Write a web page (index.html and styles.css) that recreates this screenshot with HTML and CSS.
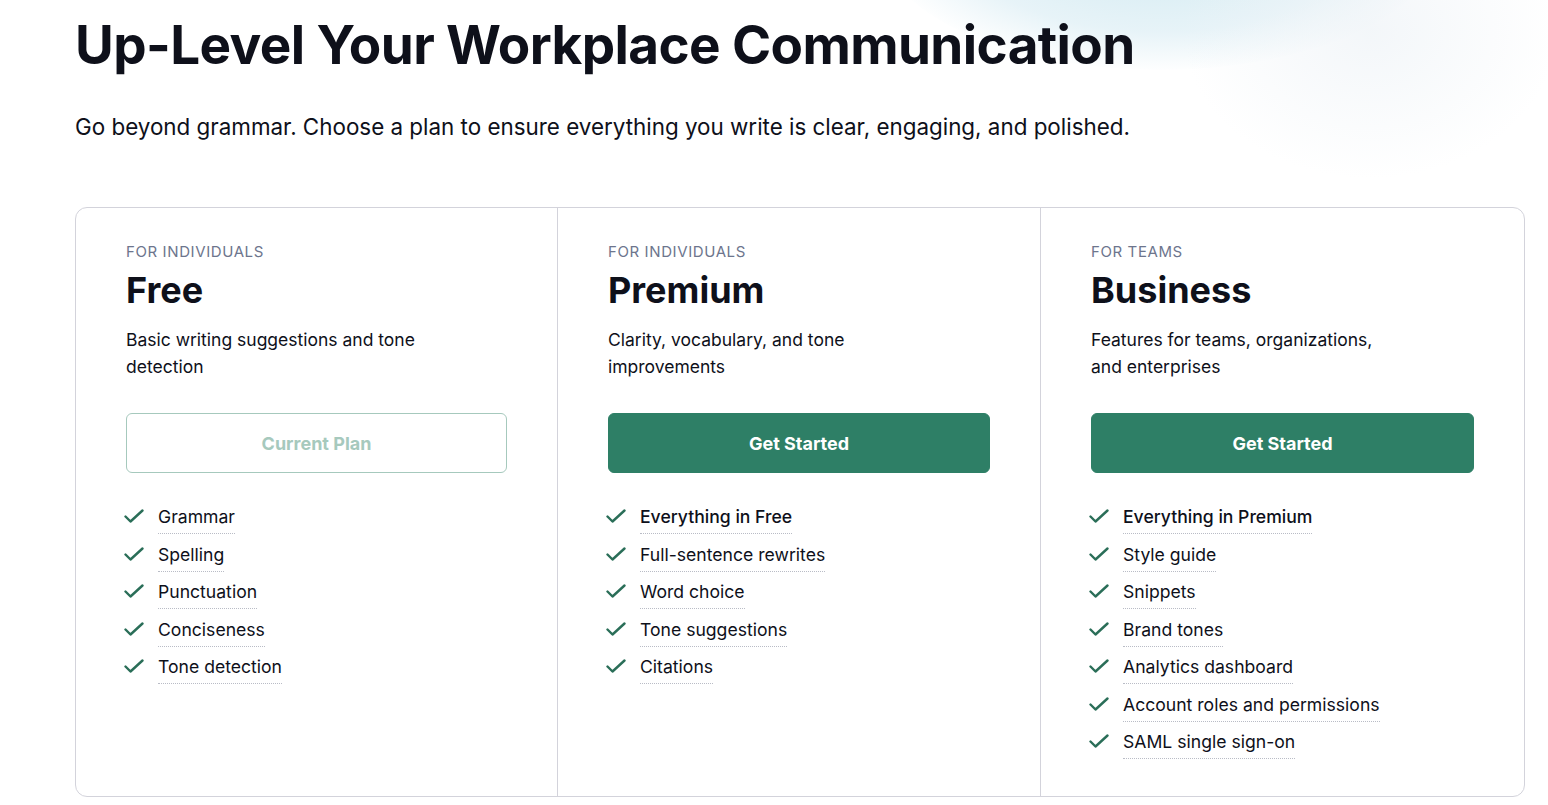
FILE: index.html
```html
<!DOCTYPE html>
<html lang="en">
<head>
<meta charset="utf-8">
<title>Plans</title>
<link rel="stylesheet" href="styles.css">
</head>
<body>
<div class="glow"></div>
<div class="glow2"></div>
<main class="page">
  <h1 class="title">Up-Level Your Workplace Communication</h1>
  <p class="subtitle">Go beyond grammar. Choose a plan to ensure everything you write is clear, engaging, and polished.</p>

  <section class="plans">
    <div class="plan">
      <div class="kicker">FOR INDIVIDUALS</div>
      <h2 class="name">Free</h2>
      <p class="desc">Basic writing suggestions and tone detection</p>
      <button class="btn btn-current">Current Plan</button>
      <ul class="features">
        <li><svg class="check" viewBox="0 0 20 14"><path d="M1.5 7.5l5 5L18.5 1.5"/></svg><span>Grammar</span></li>
        <li><svg class="check" viewBox="0 0 20 14"><path d="M1.5 7.5l5 5L18.5 1.5"/></svg><span>Spelling</span></li>
        <li><svg class="check" viewBox="0 0 20 14"><path d="M1.5 7.5l5 5L18.5 1.5"/></svg><span>Punctuation</span></li>
        <li><svg class="check" viewBox="0 0 20 14"><path d="M1.5 7.5l5 5L18.5 1.5"/></svg><span>Conciseness</span></li>
        <li><svg class="check" viewBox="0 0 20 14"><path d="M1.5 7.5l5 5L18.5 1.5"/></svg><span>Tone detection</span></li>
      </ul>
    </div>
    <div class="plan">
      <div class="kicker">FOR INDIVIDUALS</div>
      <h2 class="name">Premium</h2>
      <p class="desc">Clarity, vocabulary, and tone improvements</p>
      <button class="btn btn-primary">Get Started</button>
      <ul class="features">
        <li class="strong"><svg class="check" viewBox="0 0 20 14"><path d="M1.5 7.5l5 5L18.5 1.5"/></svg><span>Everything in Free</span></li>
        <li><svg class="check" viewBox="0 0 20 14"><path d="M1.5 7.5l5 5L18.5 1.5"/></svg><span>Full-sentence rewrites</span></li>
        <li><svg class="check" viewBox="0 0 20 14"><path d="M1.5 7.5l5 5L18.5 1.5"/></svg><span>Word choice</span></li>
        <li><svg class="check" viewBox="0 0 20 14"><path d="M1.5 7.5l5 5L18.5 1.5"/></svg><span>Tone suggestions</span></li>
        <li><svg class="check" viewBox="0 0 20 14"><path d="M1.5 7.5l5 5L18.5 1.5"/></svg><span>Citations</span></li>
      </ul>
    </div>
    <div class="plan">
      <div class="kicker">FOR TEAMS</div>
      <h2 class="name">Business</h2>
      <p class="desc">Features for teams, organizations, and enterprises</p>
      <button class="btn btn-primary">Get Started</button>
      <ul class="features">
        <li class="strong"><svg class="check" viewBox="0 0 20 14"><path d="M1.5 7.5l5 5L18.5 1.5"/></svg><span>Everything in Premium</span></li>
        <li><svg class="check" viewBox="0 0 20 14"><path d="M1.5 7.5l5 5L18.5 1.5"/></svg><span>Style guide</span></li>
        <li><svg class="check" viewBox="0 0 20 14"><path d="M1.5 7.5l5 5L18.5 1.5"/></svg><span>Snippets</span></li>
        <li><svg class="check" viewBox="0 0 20 14"><path d="M1.5 7.5l5 5L18.5 1.5"/></svg><span>Brand tones</span></li>
        <li><svg class="check" viewBox="0 0 20 14"><path d="M1.5 7.5l5 5L18.5 1.5"/></svg><span>Analytics dashboard</span></li>
        <li><svg class="check" viewBox="0 0 20 14"><path d="M1.5 7.5l5 5L18.5 1.5"/></svg><span>Account roles and permissions</span></li>
        <li><svg class="check" viewBox="0 0 20 14"><path d="M1.5 7.5l5 5L18.5 1.5"/></svg><span>SAML single sign-on</span></li>
      </ul>
    </div>
  </section>
</main>
</body>
</html>
```

FILE: styles.css
```css
* { box-sizing: border-box; }

html, body {
  margin: 0;
  padding: 0;
  background: #ffffff;
  overflow: hidden;
}

body {
  font-family: Inter, "Noto Sans", "Liberation Sans", sans-serif;
  color: #0e101a;
  position: relative;
  height: 805px;
}

.glow {
  position: absolute;
  left: 880px;
  top: -190px;
  width: 560px;
  height: 260px;
  border-radius: 50%;
  background: radial-gradient(ellipse at center, rgba(205, 232, 240, 0.95) 0%, rgba(218, 237, 244, 0.65) 50%, rgba(255, 255, 255, 0) 72%);
  pointer-events: none;
}

.glow2 {
  position: absolute;
  left: 1180px;
  top: -120px;
  width: 380px;
  height: 300px;
  border-radius: 50%;
  background: radial-gradient(ellipse at center, rgba(238, 243, 247, 0.7) 0%, rgba(255, 255, 255, 0) 70%);
  pointer-events: none;
}

.page {
  position: relative;
  padding: 0 23px 0 75px;
}

.title {
  margin: 0;
  padding-top: 13px;
  font-size: 53px;
  line-height: 64px;
  font-weight: 700;
  letter-spacing: -0.6px;
  color: #0e101a;
}

.subtitle {
  margin: 35px 0 0 0;
  font-size: 22.4px;
  line-height: 30px;
  font-weight: 400;
  color: #0e101a;
}

.plans {
  margin-top: 65px;
  display: grid;
  grid-template-columns: 481px 483px 1fr;
  border: 1px solid #d3d3db;
  border-radius: 12px;
  height: 590px;
}

.plan {
  padding: 34px 50px 0 50px;
}

.plan:first-child {
  padding-left: 50px;
}

.plan + .plan {
  border-left: 1px solid #d3d3db;
}

.kicker {
  font-size: 15px;
  line-height: 20px;
  letter-spacing: 0.6px;
  color: #6d758d;
}

.name {
  margin: 6px 0 0 0;
  font-size: 36px;
  line-height: 44px;
  font-weight: 700;
  color: #0e101a;
}

.desc {
  margin: 14px 0 0 0;
  font-size: 17.5px;
  line-height: 27px;
  color: #0e101a;
  max-width: 300px;
}

.btn {
  display: block;
  width: 100%;
  height: 60px;
  margin-top: 33px;
  border-radius: 6px;
  font-family: inherit;
  font-size: 18px;
  font-weight: 700;
  cursor: pointer;
}

.btn-current {
  background: #ffffff;
  border: 1px solid #a6c9bd;
  color: #a6c9bd;
}

.btn-primary {
  background: #2e7f66;
  border: 1px solid #2e7f66;
  color: #ffffff;
}

.features {
  list-style: none;
  margin: 31px 0 0 -2px;
  padding: 0;
}

.features li {
  display: flex;
  align-items: flex-start;
  height: 37.5px;
  font-size: 17.6px;
  line-height: 25px;
  color: #0e101a;
}

.features li.strong {
  font-weight: 500;
}

.check {
  width: 20px;
  height: 14px;
  margin-top: 5px;
  margin-right: 14px;
  flex: none;
  fill: none;
  stroke: #2a6e58;
  stroke-width: 2.4;
  stroke-linecap: round;
  stroke-linejoin: round;
}

.features span {
  border-bottom: 1px dotted #b9bcc6;
  padding-bottom: 4px;
}
```
